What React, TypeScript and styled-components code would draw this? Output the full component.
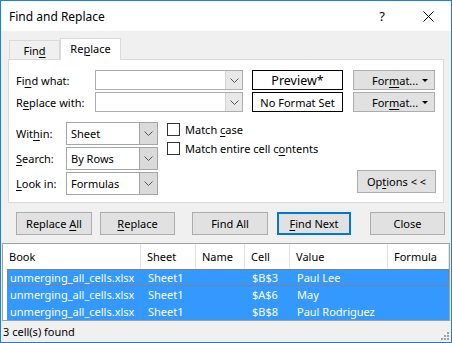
import React from "react";
import styled, { createGlobalStyle } from "styled-components";

const Global = createGlobalStyle`
  html, body { margin: 0; padding: 0; background: #f0f0f0; overflow: hidden; }
  body { font-family: "Noto Sans", "Open Sans", sans-serif; font-size: 11px; color: #000; }
  * { box-sizing: border-box; }
`;

const Window = styled.div`
  width: 452px;
  height: 343px;
  border: 1px solid #1883d7;
  background: #f0f0f0;
  display: flex;
  flex-direction: column;
  overflow: hidden;
`;

const TitleBar = styled.div`
  height: 30px;
  flex: none;
  background: #fff;
  display: flex;
  align-items: center;
  padding-left: 8px;
`;

const Title = styled.div`
  flex: 1;
  font-size: 12px;
`;

const TitleButton = styled.div`
  width: 46px;
  height: 30px;
  display: flex;
  align-items: center;
  justify-content: center;
  font-size: 13px;
`;

const Body = styled.div`
  width: 450px;
  flex: none;
  padding: 7px 7px 0 7px;
  display: flex;
  flex-direction: column;
`;

const TabRow = styled.div`
  display: flex;
  align-items: flex-end;
  height: 22px;
  padding-left: 1px;
  margin-bottom: -1px;
  position: relative;
  z-index: 1;
`;

const Tab = styled.div<{ $active?: boolean; $w: number }>`
  width: ${(p) => p.$w}px;
  height: ${(p) => (p.$active ? 22 : 19)}px;
  margin-bottom: ${(p) => (p.$active ? 0 : 1)}px;
  background: ${(p) => (p.$active ? "#fff" : "#f0f0f0")};
  border: 1px solid #d9d9d9;
  border-bottom: none;
  display: flex;
  align-items: center;
  justify-content: center;
  padding-bottom: ${(p) => (p.$active ? 2 : 0)}px;
`;

const Panel = styled.div`
  height: 144px;
  background: #fff;
  border: 1px solid #d9d9d9;
  padding: 10px 7px 0 7px;
  display: flex;
  flex-direction: column;
`;

const FieldRows = styled.div`
  display: flex;
  flex-direction: column;
  gap: 2px;
`;

const FieldRow = styled.div`
  display: flex;
  align-items: center;
  height: 20px;
`;

const Label = styled.div<{ $w: number }>`
  width: ${(p) => p.$w}px;
  flex: none;
`;

const Key = styled.span`
  text-decoration: underline;
  text-underline-offset: 2px;
`;

const Combo = styled.div`
  width: 148px;
  height: 20px;
  border: 1px solid #adadad;
  background: #fff;
  display: flex;
  justify-content: flex-end;
`;

const ComboButton = styled.div`
  width: 17px;
  height: 100%;
  background: #e8e8e8;
  border-left: 1px solid #d4d4d4;
  display: flex;
  align-items: center;
  justify-content: center;
`;

const PreviewBox = styled.div<{ $big?: boolean }>`
  width: 91px;
  height: 20px;
  margin-left: 9px;
  border: 1px solid #000;
  display: flex;
  align-items: center;
  justify-content: center;
  font-size: ${(p) => (p.$big ? 12.5 : 11)}px;
`;

const FormatButton = styled.div`
  width: 82px;
  height: 20px;
  margin-left: 10px;
  background: #e1e1e1;
  border: 1px solid #adadad;
  display: flex;
  align-items: center;
  padding: 0 6px 0 18px;
`;

const Caret = styled.span`
  margin-left: auto;
  width: 0;
  height: 0;
  border-left: 3px solid transparent;
  border-right: 3px solid transparent;
  border-top: 3px solid #000;
`;

const Lower = styled.div`
  margin-top: 10px;
  display: flex;
  height: 72px;
`;

const SelectGrid = styled.div`
  display: grid;
  grid-template-columns: 50px 92px;
  grid-auto-rows: 23px;
  row-gap: 2px;
  align-items: center;
`;

const Select = styled.div`
  height: 23px;
  border: 1px solid #a5a5a5;
  background: #fff;
  display: flex;
  align-items: center;
  padding-left: 4px;
`;

const SelectValue = styled.span`
  flex: 1;
`;

const SelectButton = styled.div`
  width: 18px;
  height: 100%;
  background: #dadada;
  border-left: 1px solid #a5a5a5;
  display: flex;
  align-items: center;
  justify-content: center;
`;

const Checks = styled.div`
  margin-left: 9px;
  padding-top: 1px;
  display: flex;
  flex-direction: column;
  gap: 6px;
`;

const CheckRow = styled.div`
  display: flex;
  align-items: center;
  height: 13px;
  gap: 5px;
`;

const CheckBox = styled.span`
  width: 13px;
  height: 13px;
  border: 1px solid #333;
  background: #fff;
  flex: none;
`;

const Button = styled.div<{ $w: number; $ml?: number; $default?: boolean }>`
  width: ${(p) => p.$w}px;
  height: 23px;
  margin-left: ${(p) => p.$ml ?? 0}px;
  background: #e1e1e1;
  border: ${(p) => (p.$default ? "2px solid #0078d7" : "1px solid #adadad")};
  display: flex;
  align-items: center;
  justify-content: center;
  flex: none;
  white-space: pre;
`;

const OptionsButton = styled(Button)`
  margin-left: auto;
  align-self: flex-end;
  margin-bottom: 1px;
`;

const ButtonRow = styled.div`
  margin-top: 9px;
  display: flex;
`;

const ResultList = styled.div`
  margin: 8px 0 0 1px;
  width: 448px;
  height: 78px;
  flex: none;
  border: 1px solid #a0a0a0;
  background: #fff;
  display: flex;
  flex-direction: column;
  align-items: flex-start;
  overflow: hidden;
`;

const colWidths = [138, 55, 49, 45, 98, 61];

const HeaderRow = styled.div`
  display: flex;
  width: 446px;
  height: 25px;
  flex: none;
  background: #fff;
`;

const HeaderCell = styled.div<{ $w: number }>`
  width: ${(p) => p.$w}px;
  flex: none;
  border-right: 1px solid #e5e5e5;
  padding-left: 6px;
  display: flex;
  align-items: center;
`;

const DataRow = styled.div<{ $focus?: boolean }>`
  display: flex;
  width: 442px;
  flex: none;
  margin-left: 4px;
  height: 17px;
  background: #3399ff;
  color: #fff;
  outline: ${(p) => (p.$focus ? "1px dotted #c46a1a" : "none")};
  outline-offset: -1px;
`;

const DataCell = styled.div<{ $w: number; $first?: boolean }>`
  width: ${(p) => p.$w}px;
  flex: none;
  padding-left: ${(p) => (p.$first ? 3 : 7)}px;
  display: flex;
  align-items: center;
  white-space: nowrap;
  overflow: hidden;
`;

const Status = styled.div`
  width: 450px;
  height: 21px;
  flex: none;
  padding: 0 1px 0 2px;
  display: flex;
  align-items: flex-end;
  justify-content: space-between;
`;

const StatusText = styled.span`
  align-self: center;
`;

const Grip = styled.svg`
  margin-bottom: 1px;
  flex: none;
  display: block;
`;

const Chevron = () => (
  <svg width="9" height="5" viewBox="0 0 9 5">
    <polyline points="0.5,0.5 4.5,4.5 8.5,0.5" fill="none" stroke="#555" strokeWidth="1" />
  </svg>
);

const headers = ["Book", "Sheet", "Name", "Cell", "Value", "Formula"];
const rows = [
  ["unmerging_all_cells.xlsx", "Sheet1", "", "$B$3", "Paul Lee", ""],
  ["unmerging_all_cells.xlsx", "Sheet1", "", "$A$6", "May", ""],
  ["unmerging_all_cells.xlsx", "Sheet1", "", "$B$8", "Paul Rodriguez", ""],
];

export default function App() {
  return (
    <>
      <Global />
      <Window>
        <TitleBar>
          <Title>Find and Replace</Title>
          <TitleButton>?</TitleButton>
          <TitleButton>
            <svg width="11" height="11" viewBox="0 0 11 11">
              <line x1="0.5" y1="0.5" x2="10.5" y2="10.5" stroke="#000" strokeWidth="1" />
              <line x1="10.5" y1="0.5" x2="0.5" y2="10.5" stroke="#000" strokeWidth="1" />
            </svg>
          </TitleButton>
        </TitleBar>
        <Body>
          <TabRow>
            <Tab $w={51}>
              Fin<Key>d</Key>
            </Tab>
            <Tab $w={61} $active>
              Re<Key>p</Key>lace
            </Tab>
          </TabRow>
          <Panel>
            <FieldRows>
              <FieldRow>
                <Label $w={79}>
                  Fi<Key>n</Key>d what:
                </Label>
                <Combo>
                  <ComboButton>
                    <Chevron />
                  </ComboButton>
                </Combo>
                <PreviewBox $big>Preview*</PreviewBox>
                <FormatButton>
                  For<Key>m</Key>at...
                  <Caret />
                </FormatButton>
              </FieldRow>
              <FieldRow>
                <Label $w={79}>
                  R<Key>e</Key>place with:
                </Label>
                <Combo>
                  <ComboButton>
                    <Chevron />
                  </ComboButton>
                </Combo>
                <PreviewBox>No Format Set</PreviewBox>
                <FormatButton>
                  For<Key>m</Key>at...
                  <Caret />
                </FormatButton>
              </FieldRow>
            </FieldRows>
            <Lower>
              <SelectGrid>
                <Label $w={50}>
                  Wit<Key>h</Key>in:
                </Label>
                <Select>
                  <SelectValue>Sheet</SelectValue>
                  <SelectButton>
                    <Chevron />
                  </SelectButton>
                </Select>
                <Label $w={50}>
                  <Key>S</Key>earch:
                </Label>
                <Select>
                  <SelectValue>By Rows</SelectValue>
                  <SelectButton>
                    <Chevron />
                  </SelectButton>
                </Select>
                <Label $w={50}>
                  <Key>L</Key>ook in:
                </Label>
                <Select>
                  <SelectValue>Formulas</SelectValue>
                  <SelectButton>
                    <Chevron />
                  </SelectButton>
                </Select>
              </SelectGrid>
              <Checks>
                <CheckRow>
                  <CheckBox />
                  <span>
                    Match <Key>c</Key>ase
                  </span>
                </CheckRow>
                <CheckRow>
                  <CheckBox />
                  <span>
                    Match entire cell c<Key>o</Key>ntents
                  </span>
                </CheckRow>
              </Checks>
              <OptionsButton $w={79}>
                Op<Key>t</Key>ions &lt; &lt;
              </OptionsButton>
            </Lower>
          </Panel>
          <ButtonRow>
            <Button $w={76} $ml={8}>
              {"Replace "}
              <Key>A</Key>ll
            </Button>
            <Button $w={75} $ml={8}>
              <Key>R</Key>eplace
            </Button>
            <Button $w={76} $ml={17}>
              Find All
            </Button>
            <Button $w={74} $ml={9} $default>
              <Key>F</Key>ind Next
            </Button>
            <Button $w={75} $ml={19}>
              Close
            </Button>
          </ButtonRow>
        </Body>
        <ResultList>
          <HeaderRow>
            {headers.map((h, j) => (
              <HeaderCell key={h} $w={colWidths[j]}>
                {h}
              </HeaderCell>
            ))}
          </HeaderRow>
          {rows.map((r, i) => (
            <DataRow key={i} $focus={i === 0}>
              {r.map((c, j) => (
                <DataCell key={j} $first={j === 0} $w={j === 0 ? colWidths[0] - 4 : colWidths[j]}>
                  {c}
                </DataCell>
              ))}
            </DataRow>
          ))}
        </ResultList>
        <Status>
          <StatusText>3 cell(s) found</StatusText>
          <Grip width="9" height="9" viewBox="0 0 9 9">
            <rect x="6" y="0" width="2" height="2" fill="#a0a0a0" />
            <rect x="3" y="3" width="2" height="2" fill="#a0a0a0" />
            <rect x="6" y="3" width="2" height="2" fill="#a0a0a0" />
            <rect x="0" y="6" width="2" height="2" fill="#a0a0a0" />
            <rect x="3" y="6" width="2" height="2" fill="#a0a0a0" />
            <rect x="6" y="6" width="2" height="2" fill="#a0a0a0" />
          </Grip>
        </Status>
      </Window>
    </>
  );
}
